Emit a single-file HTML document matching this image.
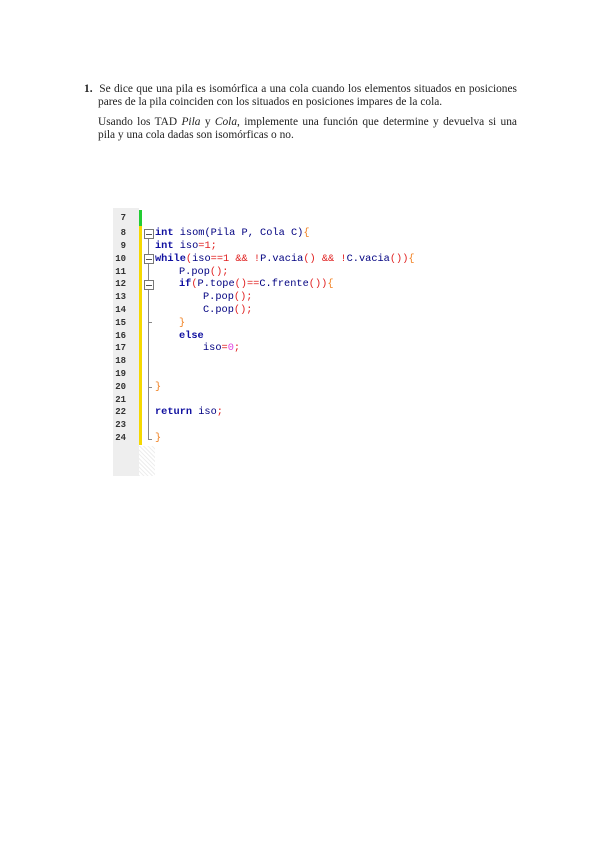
<!DOCTYPE html>
<html><head><style>
body{margin:0;width:600px;height:848px;background:#fff;position:relative;overflow:hidden;font-family:"Liberation Serif",serif;}
.t{position:absolute;font-size:11.4px;color:#222;white-space:nowrap;}
.j{text-align:justify;text-align-last:justify;white-space:normal;}
.gut{position:absolute;left:113px;top:208px;width:26px;height:268px;background:#eeeeee;}
.dot{position:absolute;left:139px;top:446px;width:16px;height:30px;background:repeating-linear-gradient(45deg,#eee 0 1px,#fff 1px 3px);}
.ln{position:absolute;left:114px;width:12px;font:bold 9px "Liberation Mono",monospace;color:#333;text-align:right;}
.c{position:absolute;font:10.3px "Liberation Mono",monospace;color:#000080;white-space:pre;}
.k{color:#1010a0;font-weight:bold}.r{color:#e02020}.o{color:#f08020}
.box{position:absolute;left:144px;width:8px;height:8px;border:1px solid #777;background:#fff;}
.box:after{content:"";position:absolute;left:1px;right:1px;top:3.5px;height:1px;background:#555;}
</style></head><body>
<div class="t j" style="left:84px;top:83px;width:433px"><b>1.</b>&nbsp; Se dice que una pila es isomórfica a una cola cuando los elementos situados en posiciones</div>
<div class="t" style="left:98px;top:96px">pares de la pila coinciden con los situados en posiciones impares de la cola.</div>
<div class="t j" style="left:98px;top:116px;width:419px">Usando los TAD <i>Pila</i> y <i>Cola</i>, implemente una función que determine y devuelva si una</div>
<div class="t" style="left:98px;top:129px">pila y una cola dadas son isomórficas o no.</div>

<div class="gut"></div>
<div class="dot"></div>
<div style="position:absolute;left:139px;top:210px;width:3px;height:16px;background:#22cc33"></div>
<div style="position:absolute;left:139px;top:226px;width:3px;height:219px;background:#f5d800"></div>
<div style="position:absolute;left:148px;top:236px;width:1px;height:204px;background:#888"></div>
<div style="position:absolute;left:148px;top:322px;width:4px;height:1px;background:#888"></div>
<div style="position:absolute;left:148px;top:387px;width:4px;height:1px;background:#888"></div>
<div style="position:absolute;left:148px;top:439px;width:4px;height:1px;background:#888"></div>
<div class="box" style="top:229px"></div>
<div class="box" style="top:254px"></div>
<div class="box" style="top:280px"></div>

<div class="ln" style="top:213px">7</div>
<div class="ln" style="top:228px">8</div>
<div class="ln" style="top:241px">9</div>
<div class="ln" style="top:254px">10</div>
<div class="ln" style="top:267px">11</div>
<div class="ln" style="top:279px">12</div>
<div class="ln" style="top:292px">13</div>
<div class="ln" style="top:305px">14</div>
<div class="ln" style="top:318px">15</div>
<div class="ln" style="top:331px">16</div>
<div class="ln" style="top:343px">17</div>
<div class="ln" style="top:356px">18</div>
<div class="ln" style="top:369px">19</div>
<div class="ln" style="top:382px">20</div>
<div class="ln" style="top:395px">21</div>
<div class="ln" style="top:407px">22</div>
<div class="ln" style="top:420px">23</div>
<div class="ln" style="top:433px">24</div>

<div class="c" style="left:155px;top:227px"><span class="k">int</span> isom(Pila P, Cola C)<span class="o">{</span></div>
<div class="c" style="left:155px;top:240px"><span class="k">int</span> iso<span class="r">=1;</span></div>
<div class="c" style="left:155px;top:253px"><span class="k">while</span><span class="r">(</span>iso<span class="r">==1 &amp;&amp; !</span>P.vacia<span class="r">() &amp;&amp; !</span>C.vacia<span class="r">())</span><span class="o">{</span></div>
<div class="c" style="left:179px;top:266px">P.pop<span class="r">();</span></div>
<div class="c" style="left:179px;top:278px"><span class="k">if</span><span class="r">(</span>P.tope<span class="r">()==</span>C.frente<span class="r">())</span><span class="o">{</span></div>
<div class="c" style="left:203px;top:291px">P.pop<span class="r">();</span></div>
<div class="c" style="left:203px;top:304px">C.pop<span class="r">();</span></div>
<div class="c" style="left:179px;top:317px"><span class="o">}</span></div>
<div class="c" style="left:179px;top:330px"><span class="k">else</span></div>
<div class="c" style="left:203px;top:342px">iso<span class="r">=</span><span style="color:#e040e0">0</span><span class="r">;</span></div>
<div class="c" style="left:155px;top:381px"><span class="o">}</span></div>
<div class="c" style="left:155px;top:406px"><span class="k">return</span> iso<span class="r">;</span></div>
<div class="c" style="left:155px;top:432px"><span class="o">}</span></div>
</body></html>
